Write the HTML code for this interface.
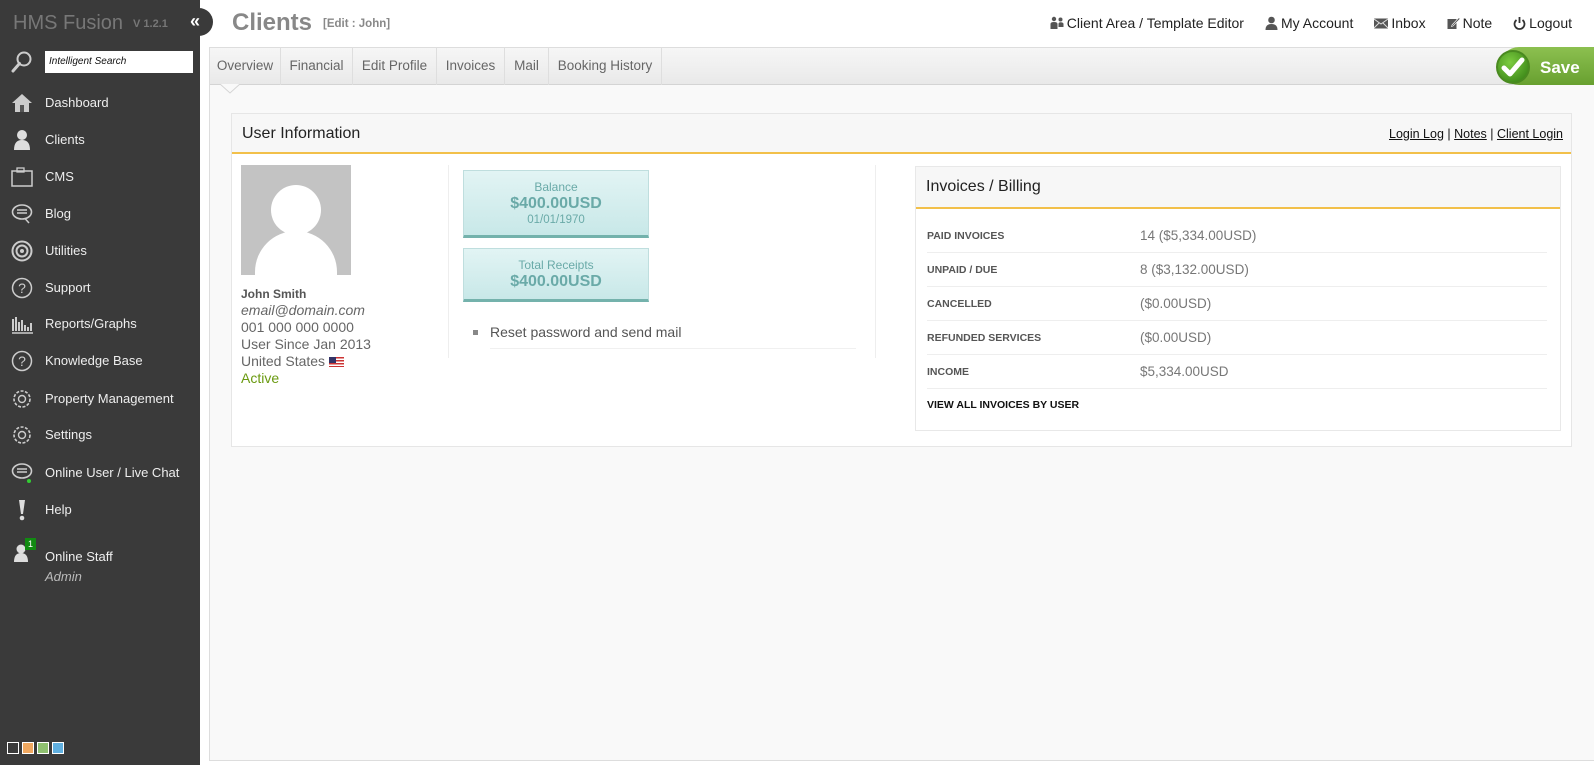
<!DOCTYPE html>
<html><head><meta charset="utf-8">
<style>
*{margin:0;padding:0;box-sizing:border-box}
body{width:1594px;height:765px;overflow:hidden;background:#fff;font-family:"Liberation Sans",Arial,sans-serif;position:relative;color:#333}
.a{position:absolute;white-space:nowrap}
#sb{position:absolute;left:0;top:0;width:200px;height:765px;background:#3a3a3a}
.it{position:absolute;left:45px;font-size:13px;color:#eee;line-height:16px}
.ic{position:absolute;left:11px;width:22px;height:22px}
.tab{position:absolute;top:47px;height:38px;line-height:38px;font-size:13.5px;color:#666;border-right:1px solid #dedede;text-align:center}
.row{position:absolute;left:927px;width:620px;height:34px;border-bottom:1px solid #eee;font-size:13.5px;color:#777}
.row b{position:absolute;left:0;top:11px;font-size:10.5px;color:#555}
.row span{position:absolute;left:213px;top:9px}
.tl{display:inline-flex;align-items:center;margin-left:21px}
.tl svg{margin-right:3px}
</style></head><body>
<div id="sb">
 <div class="a" style="left:13px;top:12px;font-size:20px;color:#777">HMS Fusion</div>
 <div class="a" style="left:133px;top:18px;font-size:11px;font-weight:bold;color:#777">V 1.2.1</div>
 <svg class="a" style="left:10px;top:50px" width="24" height="24" viewBox="0 0 24 24"><circle cx="14" cy="9" r="6.5" fill="none" stroke="#ccc" stroke-width="2"/><path d="M9.5 13.5 L3 21" stroke="#ccc" stroke-width="3" stroke-linecap="round"/></svg>
 <div class="a" style="left:45px;top:51px;width:148px;height:22px;background:#fff;font-size:10px;font-style:italic;color:#111;padding:5px 4px">Intelligent Search</div>
 <svg class="ic" style="top:92px" viewBox="0 0 22 22"><path d="M1 11 L11 2 L21 11 L18 11 L18 20 L4 20 L4 11Z" fill="#ccc"/><rect x="9" y="13" width="4" height="7" fill="#555"/></svg>
 <div class="it" style="top:95px">Dashboard</div>
 <svg class="ic" style="top:129px" viewBox="0 0 22 22"><circle cx="11" cy="6" r="5" fill="#ddd"/><path d="M3 21 Q3 11 11 11 Q19 11 19 21Z" fill="#ddd"/></svg>
 <div class="it" style="top:132px">Clients</div>
 <svg class="ic" style="top:166px" viewBox="0 0 22 22"><rect x="1" y="5" width="20" height="15" fill="none" stroke="#ccc" stroke-width="1.5"/><rect x="6" y="2" width="7" height="4" fill="none" stroke="#ccc" stroke-width="1.3"/></svg>
 <div class="it" style="top:169px">CMS</div>
 <svg class="ic" style="top:203px" viewBox="0 0 22 22"><ellipse cx="11" cy="9" rx="9.5" ry="7" fill="none" stroke="#ccc" stroke-width="1.6"/><path d="M6 7h10M6 10h10" stroke="#ccc" stroke-width="1.4"/><path d="M14 15.5 L18 20" stroke="#ccc" stroke-width="1.5"/></svg>
 <div class="it" style="top:206px">Blog</div>
 <svg class="ic" style="top:240px" viewBox="0 0 22 22"><circle cx="11" cy="11" r="9.5" fill="none" stroke="#ccc" stroke-width="2"/><circle cx="11" cy="11" r="5.5" fill="none" stroke="#ccc" stroke-width="2"/><circle cx="11" cy="11" r="2" fill="#ccc"/></svg>
 <div class="it" style="top:243px">Utilities</div>
 <svg class="ic" style="top:277px" viewBox="0 0 22 22"><circle cx="11" cy="11" r="9.5" fill="none" stroke="#ccc" stroke-width="1.5"/><text x="11" y="16" font-size="14" text-anchor="middle" fill="#ccc" font-family="Liberation Sans">?</text></svg>
 <div class="it" style="top:280px">Support</div>
 <svg class="ic" style="top:313px" viewBox="0 0 22 22"><path d="M2 6v12M5 4v14M8 9v9M11 7v11M14 12v6M17 14v4M20 10v8" stroke="#ccc" stroke-width="2"/><path d="M1 20h21" stroke="#ccc" stroke-width="1.5"/></svg>
 <div class="it" style="top:316px">Reports/Graphs</div>
 <svg class="ic" style="top:350px" viewBox="0 0 22 22"><circle cx="11" cy="11" r="9.5" fill="none" stroke="#ccc" stroke-width="1.5"/><text x="11" y="16" font-size="14" text-anchor="middle" fill="#ccc" font-family="Liberation Sans">?</text></svg>
 <div class="it" style="top:353px">Knowledge Base</div>
 <svg class="ic" style="top:388px" viewBox="0 0 22 22"><circle cx="11" cy="11" r="8" fill="none" stroke="#ccc" stroke-width="1.6" stroke-dasharray="3 1.5"/><circle cx="11" cy="11" r="3.5" fill="none" stroke="#ccc" stroke-width="1.4"/></svg>
 <div class="it" style="top:391px">Property Management</div>
 <svg class="ic" style="top:424px" viewBox="0 0 22 22"><circle cx="11" cy="11" r="8" fill="none" stroke="#ccc" stroke-width="1.6" stroke-dasharray="3 1.5"/><circle cx="11" cy="11" r="3.5" fill="none" stroke="#ccc" stroke-width="1.4"/></svg>
 <div class="it" style="top:427px">Settings</div>
 <svg class="ic" style="top:462px" viewBox="0 0 22 22"><ellipse cx="11" cy="9" rx="9.5" ry="7" fill="none" stroke="#ccc" stroke-width="1.6"/><path d="M6 7h10M6 10h10" stroke="#ccc" stroke-width="1.4"/><circle cx="18" cy="19" r="2" fill="#3c3"/></svg>
 <div class="it" style="top:465px">Online User / Live Chat</div>
 <svg class="ic" style="top:499px" viewBox="0 0 22 22"><path d="M8 1h6l-2 14h-2z" fill="#ddd"/><circle cx="11" cy="19" r="2.3" fill="#ddd"/></svg>
 <div class="it" style="top:502px">Help</div>
 <svg class="ic" style="top:541px" viewBox="0 0 22 22"><circle cx="10" cy="8" r="4.5" fill="#ddd"/><path d="M3 21 Q3 12 10 12 Q17 12 17 21Z" fill="#ddd"/></svg>
 <div class="a" style="left:25px;top:538px;width:11px;height:12px;background:#118a11;color:#fff;font-size:9px;text-align:center;line-height:12px">1</div>
 <div class="it" style="top:549px">Online Staff</div>
 <div class="it" style="top:569px;font-style:italic;color:#bbb">Admin</div>
 <div class="a" style="left:7px;top:742px;width:12px;height:12px;border:1px solid #fff"></div>
 <div class="a" style="left:22px;top:742px;width:12px;height:12px;background:#f0a860;border:1px solid #fff"></div>
 <div class="a" style="left:37px;top:742px;width:12px;height:12px;background:#8fc070;border:1px solid #fff"></div>
 <div class="a" style="left:52px;top:742px;width:12px;height:12px;background:#60b0e0;border:1px solid #fff"></div>
</div>
<div class="a" style="left:185px;top:8px;width:28px;height:28px;border-radius:50%;background:#3a3a3a;color:#fff;font-size:18px;font-weight:bold;line-height:26px;padding-left:5px">«</div>

<div class="a" style="left:232px;top:9px;font-size:24px;font-weight:bold;color:#888">Clients</div>
<div class="a" style="left:323px;top:18px;font-size:11.5px;font-weight:bold;color:#888">[Edit : John]</div>
<div class="a" style="right:22px;top:15px;font-size:14px;color:#222;display:flex">
 <span class="tl"><svg width="14" height="14" viewBox="0 0 14 14"><circle cx="4" cy="3" r="2.2" fill="#555"/><path d="M0.5 13 V8 Q0.5 6 4 6 Q7.5 6 7.5 8 V13Z" fill="#555"/><circle cx="10.5" cy="3.5" r="2" fill="#555"/><path d="M8.5 8 Q8.5 6.2 10.5 6.2 Q13.5 6.2 13.5 8 V11 H8.5Z" fill="#555"/></svg>Client Area / Template Editor</span>
 <span class="tl"><svg width="13" height="14" viewBox="0 0 13 14"><circle cx="6.5" cy="4" r="3.3" fill="#555"/><path d="M0.5 14 Q0.5 8 6.5 8 Q12.5 8 12.5 14Z" fill="#555"/></svg>My Account</span>
 <span class="tl"><svg width="14" height="11" viewBox="0 0 14 11"><rect x="0" y="0.5" width="14" height="10" fill="#555"/><path d="M0 1 L7 6 L14 1 M0 10 L5 5 M14 10 L9 5" stroke="#ddd" stroke-width="1" fill="none"/></svg>Inbox</span>
 <span class="tl"><svg width="13" height="14" viewBox="0 0 13 14"><rect x="0.5" y="3" width="9" height="10" fill="#555"/><path d="M5 9 L12 1.5 L13 3 L6 10 L4.5 10.5Z" fill="#555" stroke="#fff" stroke-width="0.6"/></svg>Note</span>
 <span class="tl"><svg width="13" height="14" viewBox="0 0 13 14"><path d="M3.5 4 A5 5 0 1 0 9.5 4" fill="none" stroke="#333" stroke-width="1.8"/><path d="M6.5 1 V7" stroke="#333" stroke-width="1.8"/></svg>Logout</span>
</div>

<div class="a" style="left:209px;top:47px;width:1390px;height:714px;background:#f9f9f9;border:1px solid #ddd"></div>
<div class="a" style="left:210px;top:48px;width:1384px;height:37px;background:linear-gradient(#f6f6f6,#e9e9e9);border-bottom:1px solid #d4d4d4"></div>
<div class="tab" style="left:210px;width:71px">Overview</div>
<div class="tab" style="left:281px;width:72px">Financial</div>
<div class="tab" style="left:353px;width:84px">Edit Profile</div>
<div class="tab" style="left:437px;width:68px">Invoices</div>
<div class="tab" style="left:505px;width:44px">Mail</div>
<div class="tab" style="left:549px;width:113px">Booking History</div>
<svg class="a" style="left:220px;top:84px" width="20" height="10"><path d="M0 0 L10 9 L20 0" fill="#f9f9f9" stroke="#d4d4d4"/></svg>
<div class="a" style="left:1500px;top:47px;width:94px;height:38px;background:linear-gradient(#8cc050,#68a030);border-radius:19px 0 0 19px"></div>
<div class="a" style="left:1496px;top:50px;width:34px;height:34px;border-radius:50%;background:radial-gradient(circle at 40% 35%,#7ccc40,#2f7a10);border:2px solid #4a8a20"></div>
<svg class="a" style="left:1501px;top:56px" width="24" height="22" viewBox="0 0 24 22"><path d="M3 12 L9 18 L21 4" fill="none" stroke="#fff" stroke-width="5" stroke-linecap="round" stroke-linejoin="round"/></svg>
<div class="a" style="left:1540px;top:58px;color:#fff;font-size:17px;font-weight:bold">Save</div>

<div class="a" style="left:231px;top:113px;width:1341px;height:334px;background:#fff;border:1px solid #e6e6e6"></div>
<div class="a" style="left:232px;top:114px;width:1339px;height:40px;background:#f7f7f7;border-bottom:2px solid #f2c04a"></div>
<div class="a" style="left:242px;top:125px;font-size:16px;color:#222">User Information</div>
<div class="a" style="right:31px;top:127px;font-size:12.5px;color:#111"><u>Login Log</u> | <u>Notes</u> | <u>Client Login</u></div>

<div class="a" style="left:241px;top:165px;width:110px;height:110px;background:#c3c3c3;overflow:hidden">
 <div class="a" style="left:30px;top:20px;width:50px;height:50px;border-radius:50%;background:#fff"></div>
 <div class="a" style="left:14px;top:66px;width:82px;height:80px;border-radius:41px 41px 0 0;background:#fff"></div>
</div>
<div class="a" style="left:241px;top:287px;font-size:12px;font-weight:bold;color:#555">John Smith</div>
<div class="a" style="left:241px;top:302px;font-size:14px;font-style:italic;color:#666">email@domain.com</div>
<div class="a" style="left:241px;top:319px;font-size:14px;color:#666">001 000 000 0000</div>
<div class="a" style="left:241px;top:336px;font-size:14px;color:#666">User Since Jan 2013</div>
<div class="a" style="left:241px;top:353px;font-size:14px;color:#666">United States <span style="display:inline-block;width:15px;height:10px;background:repeating-linear-gradient(#c33 0 1.5px,#fff 1.5px 3px);position:relative;vertical-align:-1px"><span style="position:absolute;left:0;top:0;width:7px;height:6px;background:#336"></span></span></div>
<div class="a" style="left:241px;top:370px;font-size:14px;color:#6a9a10">Active</div>

<div class="a" style="left:448px;top:165px;width:1px;height:193px;background:#eee"></div>
<div class="a" style="left:875px;top:165px;width:1px;height:193px;background:#eee"></div>

<div class="a" style="left:463px;top:170px;width:186px;height:68px;background:linear-gradient(#e2f4f4,#c8e8e8);border:1px solid #bfdede;border-bottom:3px solid #74b2ac;text-align:center;color:#6aaaa8">
 <div style="font-size:12px;margin-top:9px">Balance</div>
 <div style="font-size:16px;font-weight:bold;margin-top:1px">$400.00USD</div>
 <div style="font-size:11.5px;margin-top:1px">01/01/1970</div>
</div>
<div class="a" style="left:463px;top:248px;width:186px;height:54px;background:linear-gradient(#e2f4f4,#c8e8e8);border:1px solid #bfdede;border-bottom:3px solid #74b2ac;text-align:center;color:#6aaaa8">
 <div style="font-size:12px;margin-top:9px">Total Receipts</div>
 <div style="font-size:16px;font-weight:bold;margin-top:1px">$400.00USD</div>
</div>
<div class="a" style="left:473px;top:330px;width:5px;height:5px;background:#888"></div>
<div class="a" style="left:490px;top:324px;font-size:14px;color:#555">Reset password and send mail</div>
<div class="a" style="left:490px;top:348px;width:366px;height:1px;background:#f0f0f0"></div>

<div class="a" style="left:915px;top:166px;width:646px;height:265px;background:#fff;border:1px solid #e8e8e8"></div>
<div class="a" style="left:916px;top:167px;width:644px;height:42px;background:#f7f7f7;border-bottom:2px solid #f2c04a"></div>
<div class="a" style="left:926px;top:178px;font-size:16px;color:#222">Invoices / Billing</div>
<div class="row" style="top:219px"><b>PAID INVOICES</b><span>14 ($5,334.00USD)</span></div>
<div class="row" style="top:253px"><b>UNPAID / DUE</b><span>8 ($3,132.00USD)</span></div>
<div class="row" style="top:287px"><b>CANCELLED</b><span>($0.00USD)</span></div>
<div class="row" style="top:321px"><b>REFUNDED SERVICES</b><span>($0.00USD)</span></div>
<div class="row" style="top:355px"><b>INCOME</b><span>$5,334.00USD</span></div>
<div class="a" style="left:927px;top:399px;font-size:10.5px;font-weight:bold;color:#111">VIEW ALL INVOICES BY USER</div>
</body></html>
